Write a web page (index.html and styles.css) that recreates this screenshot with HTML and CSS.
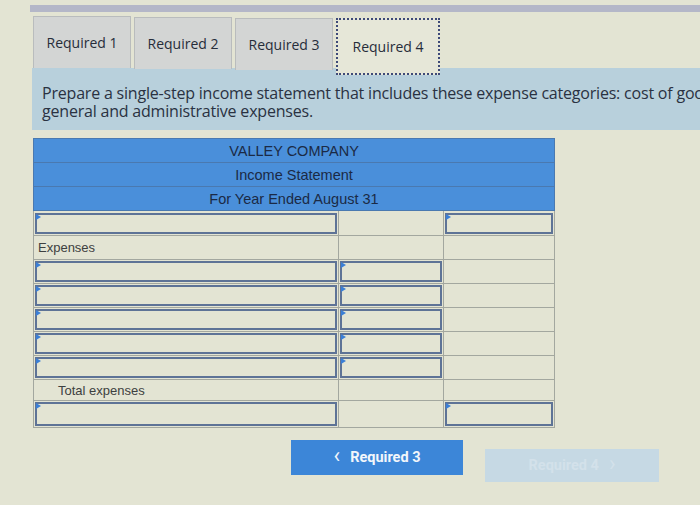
FILE: index.html
```html
<!DOCTYPE html>
<html>
<head>
<meta charset="utf-8">
<link rel="stylesheet" href="styles.css">
</head>
<body>
<div class="page">
  <div class="topbar"></div>
  <div class="tabs">
    <div class="tab">Required 1</div>
    <div class="tab">Required 2</div>
    <div class="tab">Required 3</div>
    <div class="tab active">Required 4</div>
  </div>
  <div class="prompt">
    <p>Prepare a single-step income statement that includes these expense categories: cost of goods sold, selling expenses, and<br>general and administrative expenses.</p>
  </div>
  <table class="stmt">
    <colgroup><col class="c1"><col class="c2"><col class="c3"></colgroup>
    <tr class="hd"><td colspan="3">VALLEY COMPANY</td></tr>
    <tr class="hd"><td colspan="3">Income Statement</td></tr>
    <tr class="hd"><td colspan="3">For Year Ended August 31</td></tr>
    <tr class="r tall"><td><div class="inp"></div></td><td></td><td><div class="inp"></div></td></tr>
    <tr class="r"><td class="lbl">Expenses</td><td></td><td></td></tr>
    <tr class="r"><td><div class="inp"></div></td><td><div class="inp"></div></td><td></td></tr>
    <tr class="r"><td><div class="inp"></div></td><td><div class="inp"></div></td><td></td></tr>
    <tr class="r"><td><div class="inp"></div></td><td><div class="inp"></div></td><td></td></tr>
    <tr class="r"><td><div class="inp"></div></td><td><div class="inp"></div></td><td></td></tr>
    <tr class="r"><td><div class="inp"></div></td><td><div class="inp"></div></td><td></td></tr>
    <tr class="r short"><td class="lbl ind">Total expenses</td><td></td><td></td></tr>
    <tr class="r last"><td><div class="inp"></div></td><td></td><td><div class="inp"></div></td></tr>
  </table>
  <div class="nav">
    <div class="btn prev"><span class="chev">&lsaquo;</span> Required 3</div>
    <div class="btn next">Required 4 <span class="chev">&rsaquo;</span></div>
  </div>
</div>
</body>
</html>
```
FILE: styles.css
```css
html, body {
  margin: 0;
  padding: 0;
  background: #e3e4d3;
  overflow: hidden;
  width: 700px;
  height: 505px;
}
.page {
  padding-top: 5px;
  padding-left: 30px;
  font-family: "Liberation Sans", Arial, sans-serif;
}
.topbar {
  height: 7px;
  background: #b4b7c8;
}
.tabs {
  display: flex;
  align-items: flex-start;
  gap: 3px;
  margin-top: 4px;
  margin-left: 3px;
  height: 52px;
}
.tab {
  box-sizing: border-box;
  width: 98px;
  height: 52px;
  background: #d3d5d4;
  border: 1px solid #b9bcbd;
  border-bottom: none;
  display: flex;
  align-items: center;
  justify-content: center;
  font-family: "Open Sans", sans-serif;
  font-size: 14px;
  color: #262d3a;
}
.tab:nth-child(2) { margin-top: 1px; }
.tab:nth-child(3) { margin-top: 2px; }
.tab.active {
  width: 104px;
  height: 57px;
  margin-top: 2px;
  background: #e6e7d8;
  border: 2px dotted #3e4a78;
  position: relative;
  z-index: 1;
}
.prompt {
  margin-left: 2px;
  background: #b8d0dc;
  height: 62px;
  box-sizing: border-box;
  padding: 16px 0 0 10px;
  white-space: nowrap;
  overflow: hidden;
}
.prompt p {
  margin: 0;
  font-family: "Open Sans", sans-serif;
  font-size: 16px;
  line-height: 18px;
  letter-spacing: -0.2px;
  color: #2a3242;
}
.stmt {
  margin-top: 8px;
  margin-left: 3px;
  width: 521px;
  border-collapse: collapse;
  table-layout: fixed;
}
.stmt td {
  padding: 0;
  border: 1px solid #a3a79f;
}
.hd td {
  background: #4a8fda;
  border-color: #4a79b0;
  text-align: center;
  height: 23px;
  font-size: 14.5px;
  color: #1b2a45;
}
.r td { height: 23px; }
.r.tall td { height: 24px; }
.r.short td { height: 20px; }
.r.last td { height: 26px; }
.r.last .inp { height: 24px; }
col.c1 { width: 305px; }
col.c2 { width: 105px; }
col.c3 { width: 111px; }
.lbl {
  font-size: 13px;
  color: #3d4040;
  padding-left: 4px !important;
  vertical-align: middle;
}
.lbl.ind { padding-left: 24px !important; }
.inp {
  box-sizing: border-box;
  height: 21px;
  margin: 1px;
  border: 2px solid #5e7396;
  position: relative;
}
.inp::before {
  content: "";
  position: absolute;
  left: -1px;
  top: -1px;
  border-left: 5px solid #3b7fd6;
  border-top: 3px solid transparent;
  border-bottom: 3px solid transparent;
}
.nav {
  display: flex;
  align-items: flex-start;
  margin-left: 261px;
  margin-top: 12px;
  gap: 22px;
}
.btn {
  box-sizing: border-box;
  height: 35px;
  width: 172px;
  display: flex;
  align-items: center;
  justify-content: center;
  gap: 10px;
  font-family: "Roboto", "Liberation Sans", sans-serif;
  font-weight: bold;
  font-size: 14.5px;
}
.prev {
  background: #3c86d8;
  color: #f2f6fb;
}
.next {
  margin-top: 9px;
  width: 174px;
  height: 33px;
  background: #c6d9e4;
  color: #d3e1ea;
}
.chev {
  font-size: 22px;
  line-height: 1;
  margin-top: -3px;
  font-weight: normal;
}
```
